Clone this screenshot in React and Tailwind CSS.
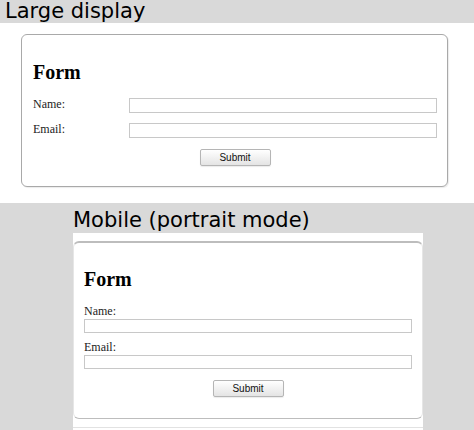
import React from 'react'

function FormButton() {
  return (
    <button
      type="button"
      className="h-[17px] w-[71px] rounded-[2px] border border-[#b5b5b5] bg-gradient-to-b from-[#ffffff] to-[#e4e4e4] text-[10px] leading-none text-[#111] shadow-[0_1px_1px_rgba(0,0,0,0.08)] [font-family:'Liberation_Sans',Arial,sans-serif]"
    >
      Submit
    </button>
  )
}

function LargeForm() {
  return (
    <div className="h-[153px] rounded-[6px] border border-[#a9a9a9] bg-white pl-[11px] pr-[10px] pt-[27px] shadow-[1px_1px_1px_rgba(0,0,0,0.08)]">
      <h2 className="text-[20px] font-bold leading-none text-black">Form</h2>
      <div className="mt-[16px] flex flex-col gap-[10px]">
        <div className="flex items-start">
          <label className="w-[96px] text-[12px] leading-none text-[#222]">Name:</label>
          <input className="h-[15px] flex-1 border border-[#c8c8c8] bg-white" />
        </div>
        <div className="flex items-start">
          <label className="w-[96px] text-[12px] leading-none text-[#222]">Email:</label>
          <input className="h-[15px] flex-1 border border-[#c8c8c8] bg-white" />
        </div>
      </div>
      <div className="mt-[11px] flex justify-center">
        <FormButton />
      </div>
    </div>
  )
}

function MobileForm() {
  return (
    <div className="h-[178px] rounded-[6px] border border-t-[2px] border-[#bdbdbd] border-x-[#e6e6e6] bg-white px-[10px] pt-[26px]">
      <h2 className="text-[20px] font-bold leading-none text-black">Form</h2>
      <div className="mt-[16px] flex flex-col">
        <label className="text-[12px] leading-none text-[#222]">Name:</label>
        <input className="mt-[2px] h-[14px] w-full border border-[#c8c8c8] bg-white" />
        <label className="mt-[8px] text-[12px] leading-none text-[#222]">Email:</label>
        <input className="mt-[2px] h-[14px] w-full border border-[#c8c8c8] bg-white" />
      </div>
      <div className="mt-[11px] flex justify-center">
        <FormButton />
      </div>
    </div>
  )
}

export default function App() {
  return (
    <div className="h-[430px] w-[474px] overflow-hidden bg-white [font-family:'Liberation_Serif','Times_New_Roman',serif]">
      {/* Large display */}
      <div className="h-[23px] bg-[#d9d9d9] pl-[5px] text-[21px] leading-[23px] text-black [font-family:'DejaVu_Sans',sans-serif]">
        Large display
      </div>
      <div className="px-[21px] pb-[16px] pr-[26px] pt-[11px]">
        <LargeForm />
      </div>

      {/* Mobile */}
      <div className="h-[227px] bg-[#d9d9d9] pl-[73px]">
        <div className="h-[30px] pt-[5px] text-[21px] leading-[25px] text-black [font-family:'DejaVu_Sans',sans-serif]">
          Mobile (portrait mode)
        </div>
        <div className="h-[197px] w-[350px] bg-white pt-[8px]">
          <MobileForm />
          <div className="mt-[8px] h-px bg-[#e2e2e2]" />
        </div>
      </div>
    </div>
  )
}
